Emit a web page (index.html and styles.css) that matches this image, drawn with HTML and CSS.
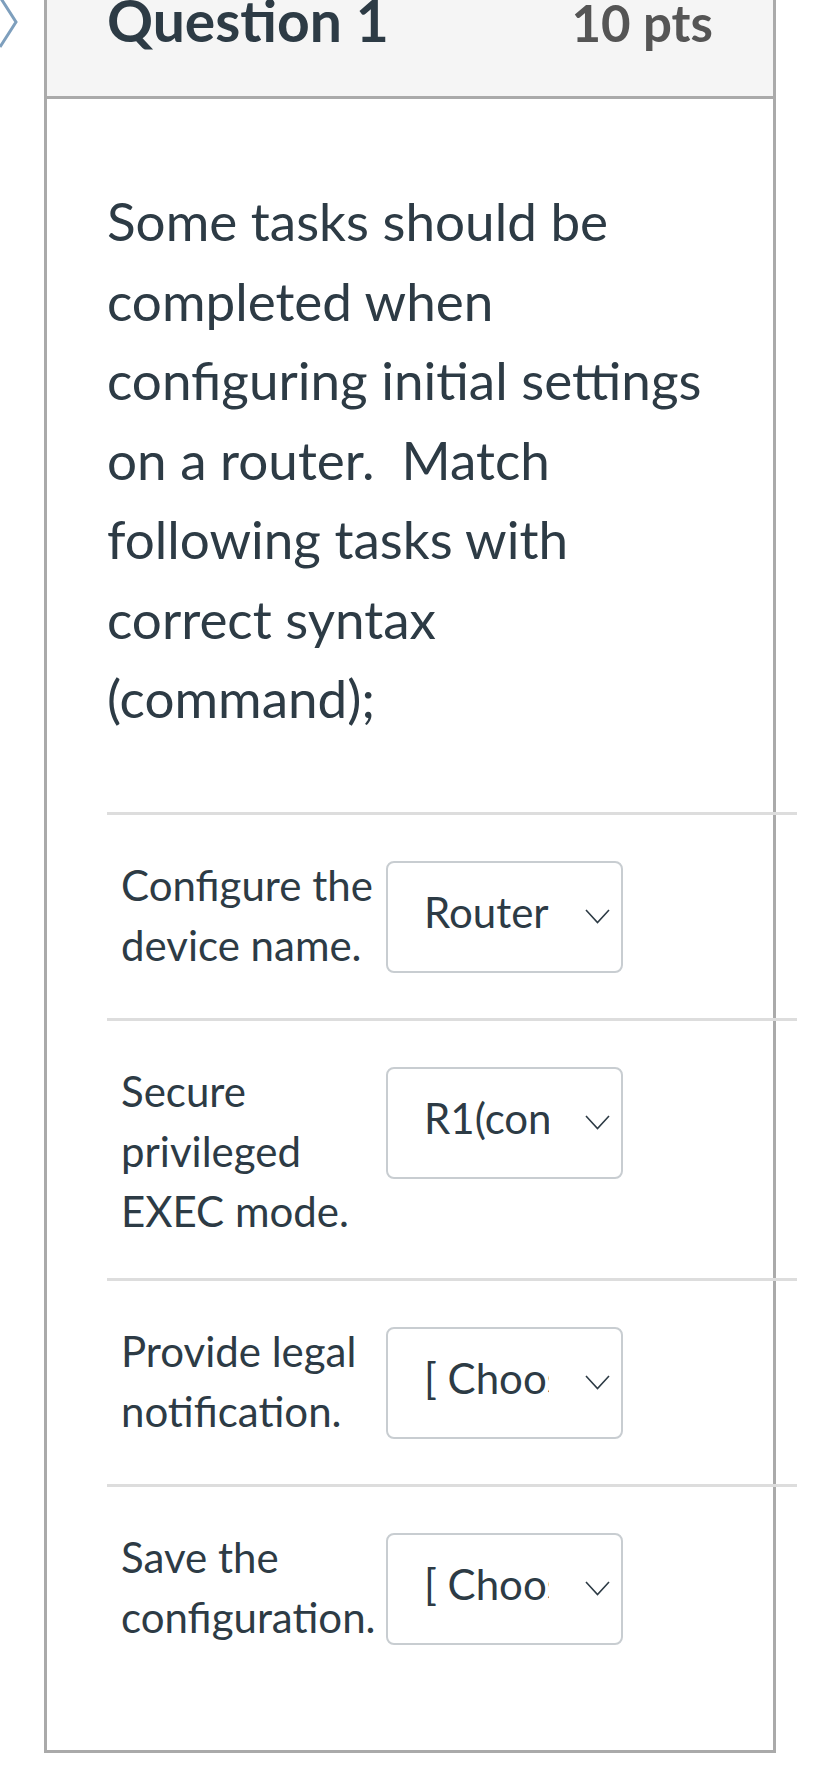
FILE: index.html
```html
<!DOCTYPE html>
<html lang="en">
<head>
<meta charset="utf-8">
<title>Question 1</title>
<link rel="stylesheet" href="styles.css">
</head>
<body>
<div class="page">
  <div class="nav-col">
    <svg class="nav-arrow" width="24" height="48" viewBox="0 0 24 48" aria-hidden="true">
      <polyline points="0,-3 16,22 0,47" fill="none" stroke="#7e9fbd" stroke-width="3" stroke-linejoin="miter"/>
    </svg>
  </div>
  <div class="question">
    <div class="q-header">
      <span class="q-title">Question 1</span>
      <span class="q-points">10 pts</span>
    </div>
    <div class="q-body">
      <p class="q-text">Some tasks should be completed when configuring initial settings on a router.&nbsp; Match following tasks with correct syntax (command);</p>
      <div class="answers">
        <div class="answer">
          <div class="answer-label">Configure the device name.</div>
          <div class="select">
            <span class="select-value">Router</span>
            <svg class="select-caret" width="25" height="15" viewBox="0 0 25 15" aria-hidden="true"><polyline points="1,1 12.5,13.5 24,1" fill="none" stroke="#2d3b45" stroke-width="1.6"/></svg>
          </div>
        </div>
        <div class="answer">
          <div class="answer-label">Secure privileged EXEC mode.</div>
          <div class="select">
            <span class="select-value">R1(config)# enable secret class</span>
            <svg class="select-caret" width="25" height="15" viewBox="0 0 25 15" aria-hidden="true"><polyline points="1,1 12.5,13.5 24,1" fill="none" stroke="#2d3b45" stroke-width="1.6"/></svg>
          </div>
        </div>
        <div class="answer">
          <div class="answer-label">Provide legal notification.</div>
          <div class="select">
            <span class="select-value">[ Choose ]</span>
            <svg class="select-caret" width="25" height="15" viewBox="0 0 25 15" aria-hidden="true"><polyline points="1,1 12.5,13.5 24,1" fill="none" stroke="#2d3b45" stroke-width="1.6"/></svg>
          </div>
        </div>
        <div class="answer">
          <div class="answer-label">Save the configuration.</div>
          <div class="select">
            <span class="select-value">[ Choose ]</span>
            <svg class="select-caret" width="25" height="15" viewBox="0 0 25 15" aria-hidden="true"><polyline points="1,1 12.5,13.5 24,1" fill="none" stroke="#2d3b45" stroke-width="1.6"/></svg>
          </div>
        </div>
      </div>
    </div>
  </div>
</div>
</body>
</html>
```
FILE: styles.css
```css
html, body {
  margin: 0;
  padding: 0;
  background: #ffffff;
}
body {
  font-family: Lato, "Open Sans", "Liberation Sans", sans-serif;
  color: #2d3b45;
  overflow: hidden;
}
.page {
  display: flex;
  align-items: flex-start;
  width: 820px;
}
.nav-col {
  width: 44px;
  flex-shrink: 0;
}
.nav-arrow {
  display: block;
}
.question {
  width: 732px;
  box-sizing: border-box;
  border: 3px solid #aaaaaa;
  border-top: none;
  flex-shrink: 0;
}
.q-header {
  display: flex;
  justify-content: space-between;
  align-items: baseline;
  height: 96px;
  padding: 0 60px;
  background: #f5f5f5;
  border-bottom: 3px solid #aaaaaa;
  font-weight: 700;
  line-height: 40px;
}
.q-title {
  color: #2d3b45;
  font-size: 57px;
}
.q-points {
  color: #555555;
  font-size: 51px;
}
.q-body {
  padding: 82px 60px 60px 60px;
}
.q-text {
  margin: 0 0 74px 0;
  max-width: 598px;
  font-size: 53px;
  line-height: 79.5px;
}
.answers {
  width: 690px;
}
.answer {
  display: flex;
  align-items: flex-start;
  gap: 5px;
  padding: 40px 0 37px 14px;
  border-top: 3px solid #dddddd;
}
.answer-label {
  width: 260px;
  flex-shrink: 0;
  font-size: 42px;
  line-height: 60px;
}
.select {
  display: flex;
  align-items: flex-start;
  box-sizing: border-box;
  width: 237px;
  height: 112px;
  margin: 6px 0 8px 0;
  padding: 24px 0 0 36px;
  border: 2px solid #c8cdd1;
  border-radius: 8px;
  background: #ffffff;
  flex-shrink: 0;
}
.select-value {
  display: block;
  width: 125px;
  overflow: hidden;
  white-space: nowrap;
  font-size: 42px;
  line-height: 50px;
}
.select-caret {
  display: block;
  margin: 22px 0 0 36px;
  flex-shrink: 0;
}
```
